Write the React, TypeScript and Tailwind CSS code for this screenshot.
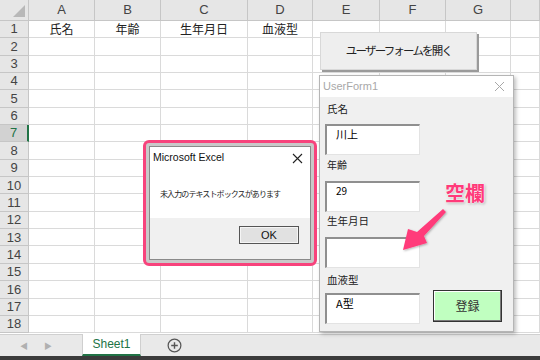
import React from "react";

const cols = ["A", "B", "C", "D", "E", "F", "G", ""];
const rows = Array.from({ length: 18 }, (_, i) => i + 1);
const row1 = ["氏名", "年齢", "生年月日", "血液型", "", "", "", ""];

const jp = "font-['Noto_Sans_CJK_JP','Liberation_Sans',sans-serif]";

function TextBox({ value, small }: { value?: string; small?: boolean }) {
  return (
    <div
      className={`w-[95px] h-[31px] bg-white border-t-2 border-l-2 border-[#8f8f8f] border-r border-b border-r-[#e3e3e3] border-b-[#e3e3e3] pl-[9px] leading-[16px] text-black ${
        small ? "text-[10px]" : "text-[11px]"
      }`}
    >
      {value}
    </div>
  );
}

export default function App() {
  return (
    <div className={`relative w-[540px] h-[360px] overflow-hidden bg-white ${jp}`}>
      {/* sheet grid */}
      <div className="grid grid-cols-[29px_66px_66px_87px_65px_67px_66px_65px_29px] grid-rows-[21px_repeat(18,17.35px)]">
        <div className="relative bg-[#e6e6e6] border-r border-b border-[#c6c6c6]">
          <svg className="absolute right-[3px] bottom-[3px]" width="12" height="12" viewBox="0 0 12 12">
            <polygon points="12,0 12,12 0,12" fill="#b8b8b8" />
          </svg>
        </div>
        {cols.map((c, i) => (
          <div
            key={"h" + i}
            className="bg-[#e6e6e6] border-r border-b border-[#c6c6c6] flex items-center justify-center text-[13px] text-[#444] font-['Liberation_Sans',sans-serif]"
          >
            {c}
          </div>
        ))}
        {rows.map((r) => (
          <React.Fragment key={r}>
            <div
              className={`flex items-center justify-center text-[13px] font-['Liberation_Sans',sans-serif] border-b border-[#c6c6c6] ${
                r === 7
                  ? "bg-[#d2d2d2] text-[#217346] border-r-2 border-r-[#217346]"
                  : "bg-[#e6e6e6] text-[#444] border-r border-r-[#c6c6c6]"
              }`}
            >
              {r}
            </div>
            {cols.map((_, i) => (
              <div
                key={i}
                className="border-r border-b border-[#dadada] flex items-center justify-center text-[12px] text-[#222] leading-none"
              >
                {r === 1 ? row1[i] : ""}
              </div>
            ))}
          </React.Fragment>
        ))}
      </div>

      {/* tab bar */}
      <div className="absolute left-0 right-0 bottom-0 h-[26px] flex flex-col">
        <div className="flex-1 bg-[#e9e9e9] border-t border-[#d0d0d0] flex items-stretch">
          <div className="w-[82px] flex items-center gap-[16px] pl-[20px] text-[8px] text-[#b0b0b0]">
            <span>◀</span>
            <span>▶</span>
          </div>
          <div className="w-[59px] -mt-px bg-white border-x border-[#cfcfcf] border-b-2 border-b-[#217346] flex items-center justify-center text-[12px] text-[#217346] font-['Liberation_Sans',sans-serif]">
            Sheet1
          </div>
          <div className="flex items-center pl-[26px]">
            <svg width="15" height="15" viewBox="0 0 16 16">
              <circle cx="8" cy="8" r="6.8" fill="none" stroke="#555" strokeWidth="1.3" />
              <path d="M8 4.5v7M4.5 8h7" stroke="#555" strokeWidth="1.5" />
            </svg>
          </div>
        </div>
        <div className="h-[4px] bg-[#3b3b3b]" />
      </div>

      {/* open form button */}
      <div className="absolute left-[320px] top-[32px] w-[157px] h-[38px] bg-[#eeeeee] border border-[#d8d8d8] shadow-[2px_2px_0_#9a9a9a] flex items-center justify-center text-[11.5px] tracking-[-1.8px] text-[#222]">
        ユーザーフォームを開く
      </div>

      {/* UserForm1 */}
      <div className="absolute left-[319px] top-[75px] w-[195px] h-[257px] border border-[#b5b5b5] bg-[#f0f0f0] shadow-[2px_2px_4px_rgba(0,0,0,0.25)] flex flex-col">
        <div className="h-[21px] bg-white flex items-center justify-between pl-[3px] pr-[8px]">
          <span className="text-[11px] text-[#a8a8a8] font-['Liberation_Sans',sans-serif]">UserForm1</span>
          <svg width="11" height="11" viewBox="0 0 11 11">
            <path d="M1 1l9 9M10 1l-9 9" stroke="#a8a8a8" strokeWidth="1" />
          </svg>
        </div>
        <div className="flex flex-col pl-[5px] text-[10.5px] text-[#222]">
          <div className="mt-[3px] h-[18px] pl-[2px] leading-[18px]">氏名</div>
          <div className="mt-[6px]">
            <TextBox value="川上" />
          </div>
          <div className="h-[18px] mt-[1px] pl-[2px] leading-[18px] text-[10px]">年齢</div>
          <div className="mt-[7px]">
            <TextBox value="29" small />
          </div>
          <div className="h-[18px] pl-[2px] leading-[18px]">生年月日</div>
          <div className="mt-[7px]">
            <TextBox />
          </div>
          <div className="h-[18px] mt-[3px] pl-[2px] leading-[18px]">血液型</div>
          <div className="mt-[4px] flex items-start gap-[13px]">
            <TextBox value="A型" />
            <div className="-mt-[3px] w-[69px] h-[32px] bg-[#c0ffc0] border border-[#333] shadow-[inset_-1px_-1px_0_#7a7a7a,inset_1px_1px_0_#fff] flex items-center justify-center text-[12px] text-[#333]">
              登録
            </div>
          </div>
        </div>
      </div>

      {/* message box */}
      <div className="absolute left-[143px] top-[140px] w-[174px] h-[126px] border-[3px] border-[#f7437c] rounded-[6px] bg-[#c9c9c9] p-[3px]">
        <div className="h-full border border-[#8a8a8a] bg-white flex flex-col">
          <div className="h-[22px] flex items-center justify-between pl-[3px] pr-[7px]">
            <span className="text-[10.5px] text-[#111] font-['Liberation_Sans',sans-serif]">Microsoft Excel</span>
            <svg width="11" height="11" viewBox="0 0 11 11">
              <path d="M1 1l9 9M10 1l-9 9" stroke="#222" strokeWidth="1.1" />
            </svg>
          </div>
          <div className="h-[49px] flex items-center pl-[10px] text-[8px] tracking-[-0.9px] whitespace-nowrap text-[#222]">
            未入力のテキストボックスがあります
          </div>
          <div className="flex-1 bg-[#f0f0f0] flex items-start justify-end pr-[11px] pt-[8px]">
            <div className="w-[60px] h-[18px] bg-[#e1e1e1] border border-[#555] shadow-[inset_0_0_0_1px_#f5f5f5] flex items-center justify-center text-[11px] text-[#111] font-['Liberation_Sans',sans-serif]">
              OK
            </div>
          </div>
        </div>
      </div>

      {/* annotation */}
      <div className="absolute left-[445px] top-[183px] text-[20px] font-bold text-[#ff3a7a] leading-none [text-shadow:0_0_2px_#fff,0_0_2px_#fff,1px_1px_3px_rgba(0,0,0,0.35)]">
        空欄
      </div>
      <svg className="absolute left-[395px] top-[200px]" width="60" height="56" viewBox="395 200 60 56">
        <defs>
          <filter id="sh" x="-20%" y="-20%" width="140%" height="140%">
            <feDropShadow dx="1" dy="1" stdDeviation="1" floodColor="#000" floodOpacity="0.3" />
          </filter>
        </defs>
        <polygon
          points="443,209 446,212 424,236 427,243 403,250 408,229 417,232"
          fill="#ff3a7a"
          filter="url(#sh)"
        />
      </svg>
    </div>
  );
}
